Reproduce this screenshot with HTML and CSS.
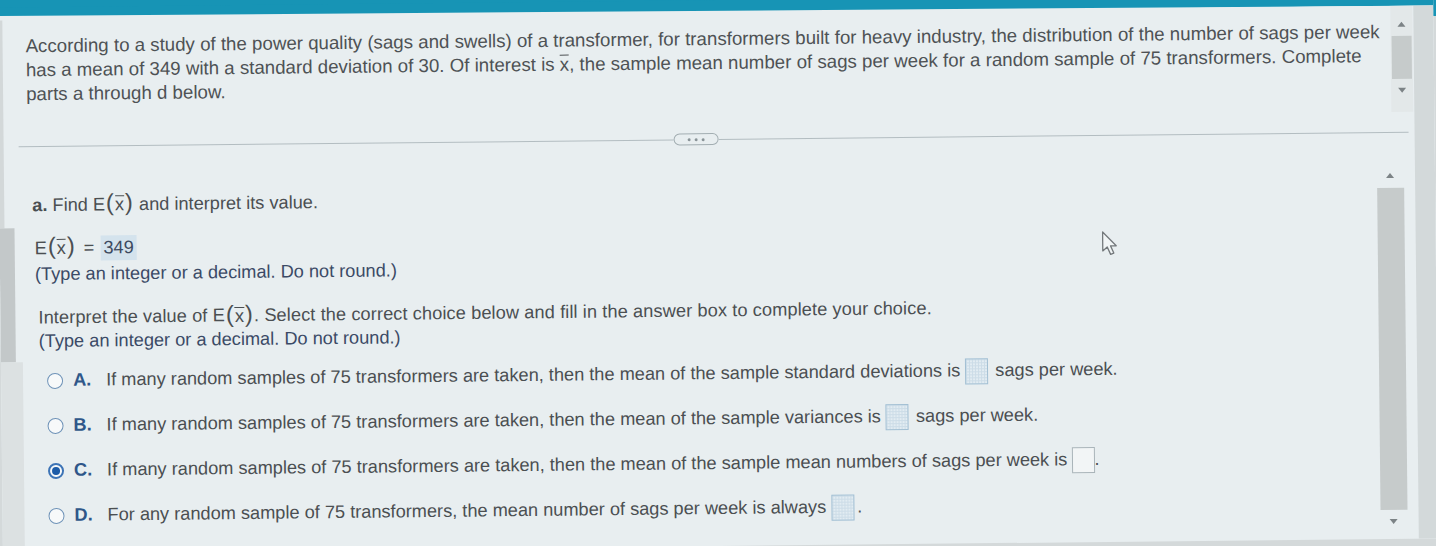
FILE: index.html
```html
<!DOCTYPE html>
<html lang="en">
<head>
<meta charset="utf-8">
<title>Sampling distribution question</title>
<link rel="stylesheet" href="styles.css">
</head>
<body>
<div class="screen">
  <div class="topbar"></div>
  <div class="frame">
    <div class="leftrail">
      <div class="lr-top"></div>
      <div class="lr-dark"></div>
      <div class="lr-bottom"></div>
    </div>
    <div class="main">
      <div class="toppane">
        <p class="stem">According to a study of the power quality (sags and swells) of a transformer, for transformers built for heavy industry, the distribution of the number of sags per week<br>has a mean of 349 with a standard deviation of 30. Of interest is <span class="xbar">x</span>, the sample mean number of sags per week for a random sample of 75 transformers. Complete<br>parts a through d below.</p>
        <div class="scroll scroll-sm">
          <span class="arrow up"></span>
          <span class="thumb"></span>
          <span class="arrow down"></span>
        </div>
      </div>
      <div class="divider">
        <span class="rule rule-left"></span>
        <span class="pill"><i></i><i></i><i></i></span>
        <span class="rule rule-right"></span>
      </div>
      <div class="lowerpane">
        <div class="work">
          <div class="q"><b class="part">a.</b> Find <span class="m">E<span class="paren">(</span><span class="xbar">x</span><span class="paren">)</span></span> and interpret its value.</div>
          <div class="eq"><span class="m">E<span class="paren">(</span><span class="xbar">x</span><span class="paren">)</span></span><span class="eqs">=</span><span class="ans">349</span></div>
          <div class="hint">(Type an integer or a decimal. Do not round.)</div>
          <div class="interp">Interpret the value of <span class="m">E<span class="paren">(</span><span class="xbar">x</span><span class="paren">)</span></span>. Select the correct choice below and fill in the answer box to complete your choice.</div>
          <div class="hint hint2">(Type an integer or a decimal. Do not round.)</div>
          <div class="opts">
            <div class="opt">
              <span class="radio"></span><span class="lbl">A.</span>
              <span class="otext">If many random samples of 75 transformers are taken, then the mean of the sample standard deviations is</span><span class="box"></span><span class="otext">sags per week.</span>
            </div>
            <div class="opt">
              <span class="radio"></span><span class="lbl">B.</span>
              <span class="otext">If many random samples of 75 transformers are taken, then the mean of the sample variances is</span><span class="box"></span><span class="otext">sags per week.</span>
            </div>
            <div class="opt">
              <span class="radio on"></span><span class="lbl">C.</span>
              <span class="otext">If many random samples of 75 transformers are taken, then the mean of the sample mean numbers of sags per week is</span><span class="box empty"></span><span class="otext tight">.</span>
            </div>
            <div class="opt">
              <span class="radio"></span><span class="lbl">D.</span>
              <span class="otext">For any random sample of 75 transformers, the mean number of sags per week is always</span><span class="box"></span><span class="otext tight">.</span>
            </div>
          </div>
        </div>
        <div class="scroll scroll-lg">
          <span class="arrow up"></span>
          <span class="thumb"></span>
          <span class="arrow down"></span>
        </div>
        <svg class="pointer" width="18" height="26" viewBox="0 0 18 26" aria-hidden="true">
          <path d="M1 1 L1 20 L5.5 16 L8.8 23.5 L12 22.2 L8.8 15 L14.5 15 Z" fill="#f1f5f6" stroke="#74797c" stroke-width="1.3" stroke-linejoin="round"/>
        </svg>
      </div>
    </div>
    <div class="rightrail"></div>
  </div>
</div>
</body>
</html>
```

FILE: styles.css
```css
html {
  background: linear-gradient(#1794b5 0 16px, #d4d9da 16px);
}

body {
  margin: 0;
  overflow: hidden;
  font-family: "Liberation Sans", Arial, sans-serif;
}

.screen {
  width: 1436px;
  height: 546px;
  display: flex;
  flex-direction: column;
  background: linear-gradient(#1794b5 0 6px, #e8eef0 6px);
  transform: rotate(-0.6deg);
  overflow: hidden;
}

.topbar {
  flex: none;
  height: 13px;
  background: #1794b5;
  clip-path: polygon(0 0, 100% 0, 100% 100%, 0 66%);
}

.frame {
  flex: 1;
  display: flex;
  min-height: 0;
}

.leftrail {
  flex: none;
  width: 20px;
  display: flex;
  flex-direction: column;
}

.lr-top {
  width: 5px;
  height: 208px;
  background: #d3d8d9;
}

.lr-dark {
  width: 15px;
  height: 134px;
  background: #c3c8c9;
}

.lr-bottom {
  flex: 1;
  width: 22px;
  background: #dce1e2;
}

.main {
  flex: 1;
  display: flex;
  flex-direction: column;
  min-width: 0;
}

.rightrail {
  flex: none;
  width: 20px;
  background: #d3d9da;
}

/* ---------- top pane ---------- */
.toppane {
  flex: none;
  height: 120px;
  display: flex;
}

.stem {
  flex: 1;
  margin: 0;
  padding: 14px 0 0 8px;
  font-size: 18.7px;
  line-height: 24px;
  color: #4e5255;
  white-space: nowrap;
}

.xbar {
  display: inline-block;
  line-height: 0.85em;
  border-top: 1px solid currentColor;
  padding-top: 1px;
}

/* ---------- scrollbars ---------- */
.scroll {
  flex: none;
  display: flex;
  flex-direction: column;
  align-items: center;
}

.scroll-sm {
  width: 22px;
  margin-right: 1px;
  padding-top: 14px;
  background: #e3e8e9;
  height: 92px;
}

.scroll-sm .thumb {
  width: 20px;
  height: 43px;
  margin: 6px 0 6px;
}

.scroll-lg {
  width: 28px;
  margin-right: 11px;
  padding-top: 33px;
}

.scroll-lg .thumb {
  width: 27px;
  height: 322px;
  margin: 7px 0 6px;
}

.thumb {
  display: block;
  background: #c6cbcb;
}

.arrow {
  display: block;
  width: 10px;
  height: 10px;
  position: relative;
}

.arrow::before {
  content: "";
  position: absolute;
  left: 1px;
  top: 2px;
  border-left: 4px solid transparent;
  border-right: 4px solid transparent;
}

.arrow.up::before {
  border-bottom: 5px solid #7c8386;
}

.arrow.down::before {
  top: 3px;
  border-top: 5px solid #7c8386;
}

/* ---------- divider ---------- */
.divider {
  flex: none;
  height: 12px;
  display: flex;
  align-items: center;
  margin-right: 6px;
}

.rule {
  height: 1px;
  background: #b3bdc1;
}

.rule-left {
  width: 655px;
}

.rule-right {
  flex: 1;
}

.pill {
  flex: none;
  box-sizing: border-box;
  width: 45px;
  height: 12px;
  border: 1.5px solid #a3aeb2;
  border-radius: 7px;
  display: flex;
  align-items: center;
  justify-content: center;
  gap: 4px;
}

.pill i {
  width: 3px;
  height: 3px;
  border-radius: 50%;
  background: #8a9498;
}

/* ---------- lower pane ---------- */
.lowerpane {
  flex: 1;
  display: flex;
  position: relative;
  min-height: 0;
}

.work {
  flex: 1;
  padding: 41px 0 0 13px;
  font-size: 18.2px;
  color: #4b4f52;
  white-space: nowrap;
}

.q {
  line-height: 24px;
}

.part {
  color: #4a4e52;
}

.m {
  display: inline-flex;
  align-items: center;
}

.paren {
  font-size: 1.3em;
  line-height: 1;
  font-weight: 300;
  margin: 0 1px;
  position: relative;
  top: -1px;
}

.eq {
  display: flex;
  align-items: center;
  height: 26px;
  margin-top: 18px;
  padding-left: 2px;
}

.eqs {
  margin: 0 6px 0 8px;
}

.ans {
  display: flex;
  align-items: center;
  height: 25px;
  padding: 0 3px;
  background: #d4e3ed;
  color: #3d4a5f;
}

.hint {
  line-height: 24px;
  margin-top: 1px;
  padding-left: 2px;
  color: #3b4a66;
}

.interp {
  line-height: 23px;
  margin-top: 20px;
  padding-left: 5px;
  letter-spacing: 0.1px;
}

.hint2 {
  line-height: 23px;
  margin-top: 0;
  padding-left: 5px;
}

.opts {
  margin-top: 15px;
  display: flex;
  flex-direction: column;
  gap: 19px;
}

.opt {
  display: flex;
  align-items: center;
  height: 26px;
  padding-left: 13px;
}

.radio {
  flex: none;
  box-sizing: border-box;
  width: 16px;
  height: 16px;
  border-radius: 50%;
  border: 1.5px solid #6f93b8;
  background: #f7f9fa;
  display: flex;
  align-items: center;
  justify-content: center;
}

.radio.on {
  border: 2px solid #3d74b6;
}

.radio.on::after {
  content: "";
  width: 8px;
  height: 8px;
  border-radius: 50%;
  background: #1d5ca8;
}

.lbl {
  flex: none;
  width: 33px;
  margin-left: 10px;
  font-weight: bold;
  color: #2f5789;
}

.box {
  flex: none;
  box-sizing: border-box;
  width: 23px;
  height: 26px;
  margin: 0 7px 0 5px;
  border: 1px solid #a2bfd3;
  background-color: #e2ecf2;
  background-image:
    linear-gradient(#ccdce7 1px, transparent 1px),
    linear-gradient(90deg, #ccdce7 1px, transparent 1px);
  background-size: 3px 3px;
}

.box.empty {
  border-color: #a9b4b9;
  background: #f2f5f6;
  margin-right: 3px;
}

.otext.tight {
  margin-left: 0;
}

.box + .tight {
  margin-left: -4px;
}

.pointer {
  position: absolute;
  left: 1082px;
  top: 90px;
}
```
